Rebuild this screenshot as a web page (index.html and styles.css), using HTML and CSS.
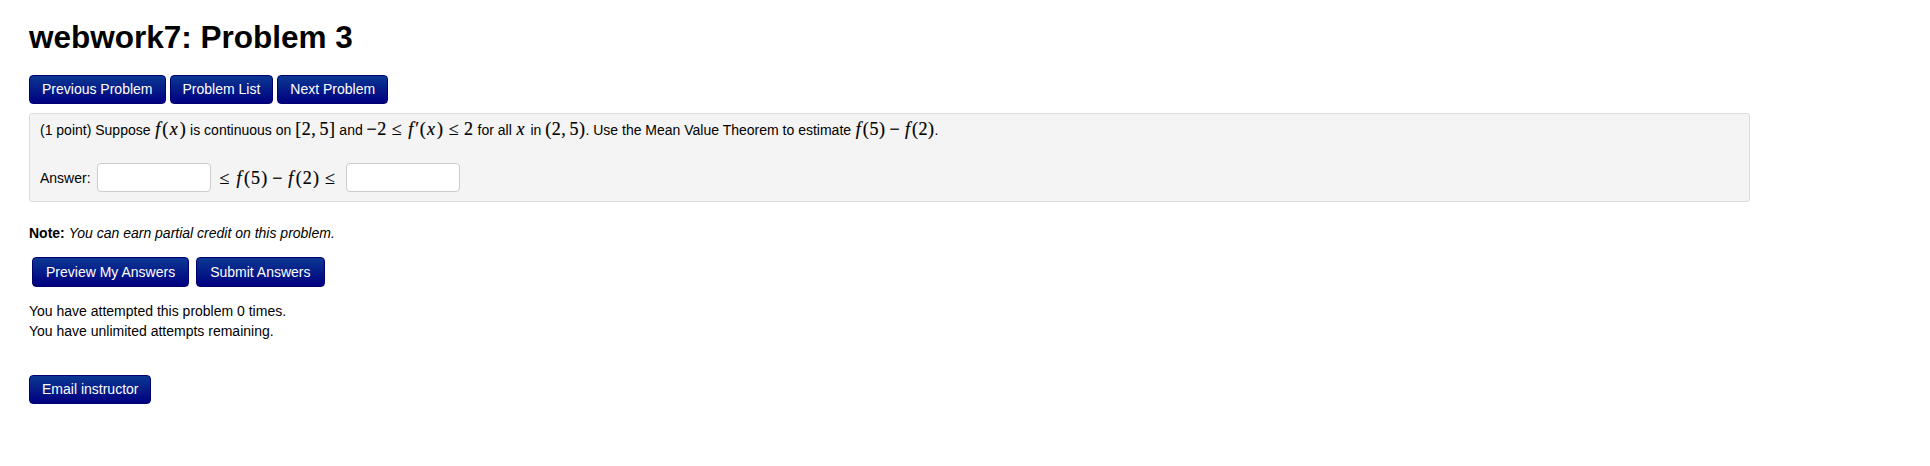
FILE: index.html
```html
<!DOCTYPE html>
<html lang="en">
  <head>
    <meta charset="UTF-8" />
    <meta name="viewport" content="width=device-width, initial-scale=1.0" />
    <title>webwork7: Problem 3</title>
    <link rel="stylesheet" href="styles.css">
  </head>

  <body>
    <div class="page">
      <h1 class="title">webwork7: Problem 3</h1>

      <div class="nav">
        <button class="btn">Previous Problem</button>
        <button class="btn">Problem List</button>
        <button class="btn">Next Problem</button>
      </div>

      <div class="problem">
        <div class="statement">
          (1 point) Suppose <span class="m"><span class="v">f</span>(<span class="v">x</span>)</span>
          is continuous on <span class="m">[2,<span class="th"></span>5]</span> and
          <span class="m">−2<span class="rel">≤</span><span class="v">f</span>′(<span class="v">x</span>)<span class="rel">≤</span>2</span>
          for all <span class="m"><span class="v">x</span></span> in
          <span class="m">(2,<span class="th"></span>5)</span>. Use the Mean Value Theorem to estimate
          <span class="m"><span class="v">f</span>(5)<span class="bin">−</span><span class="v">f</span>(2)</span>.
        </div>

        <div class="answer">
          <span class="label">Answer:</span>
          <input class="box" type="text" />
          <span class="m mid"><span class="rel first">≤</span><span class="v">f</span>(5)<span class="bin">−</span><span class="v">f</span>(2)<span class="rel last">≤</span></span>
          <input class="box" type="text" />
        </div>
      </div>

      <p class="note"><b>Note:</b> <i>You can earn partial credit on this problem.</i></p>

      <div class="submit">
        <button class="btn tall">Preview My Answers</button>
        <button class="btn tall">Submit Answers</button>
      </div>

      <p class="attempts">
        You have attempted this problem 0 times.<br />
        You have unlimited attempts remaining.
      </p>

      <div class="email">
        <button class="btn">Email instructor</button>
      </div>
    </div>
  </body>
</html>
```

FILE: styles.css
```css
* {
  box-sizing: border-box;
}

body {
  margin: 0;
  background: #fff;
  color: #000;
  font-family: "Liberation Sans", Arial, sans-serif;
  font-size: 14px;
  line-height: 20px;
}

.page {
  padding: 0 180px 0 29px;
}

.title {
  margin: 19px 0 0;
  font-size: 31.5px;
  line-height: 36px;
  font-weight: bold;
}

.nav {
  display: flex;
  gap: 4px;
  margin-top: 20px;
}

.btn {
  height: 29px;
  padding: 0 12px;
  border: 1px solid #00006e;
  border-radius: 4px;
  background: linear-gradient(to bottom, #0b3892, #000080);
  color: #fff;
  font-family: "Liberation Sans", Arial, sans-serif;
  font-size: 14px;
  line-height: 15px;
  cursor: pointer;
}

.btn.tall {
  height: 30px;
  padding: 0 13px;
}

.problem {
  margin-top: 9px;
  padding: 5px 10px 9px;
  background: #f4f4f4;
  border: 1px solid #dcdcdc;
  border-radius: 3px;
}

.statement {
  height: 20px;
  line-height: 20px;
  white-space: nowrap;
}

.m {
  font-family: "Liberation Serif", "Times New Roman", serif;
  font-size: 18px;
  letter-spacing: 0.03em;
  -webkit-text-stroke: 0.2px #000;
}

.v {
  font-style: italic;
  padding: 0 0.08em 0 0.05em;
}

.rel {
  padding: 0 0.28em;
}

.bin {
  padding: 0 0.22em;
}

.th {
  display: inline-block;
  width: 0.17em;
}

.answer {
  display: flex;
  align-items: center;
  margin-top: 24px;
}

.label {
  margin-right: 6px;
}

.box {
  width: 114px;
  height: 29px;
  border: 1px solid #cccccc;
  border-radius: 4px;
  background: #fff;
}

.mid {
  margin: 0 10px 0 9px;
  letter-spacing: 0.06em;
}

.mid .first {
  padding-left: 0;
}

.mid .last {
  padding-right: 0;
}

.note {
  margin: 21px 0 0;
}

.submit {
  display: flex;
  gap: 7px;
  margin: 14px 0 0 3px;
}

.attempts {
  margin: 14px 0 0;
}

.email {
  margin-top: 34px;
}
```
